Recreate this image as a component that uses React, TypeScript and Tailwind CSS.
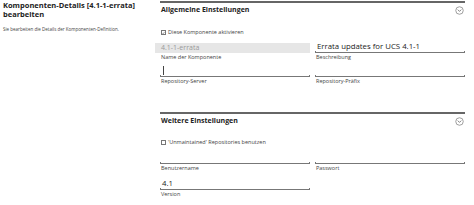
import React from "react";

const font = "font-['Open_Sans','Liberation_Sans',sans-serif]";

function Chevron() {
  return (
    <svg width="9" height="9" viewBox="0 0 18 18" fill="none" className="mr-px">
      <circle cx="9" cy="9" r="7.5" stroke="#777" strokeWidth="1.4" />
      <path d="M6 7.8l3 3 3-3" stroke="#666" strokeWidth="1.6" strokeLinecap="round" strokeLinejoin="round" />
    </svg>
  );
}

function Checkbox({ checked, label }: { checked?: boolean; label: string }) {
  return (
    <div className="flex items-center gap-[2px] pl-[1px]">
      <span className="w-[5px] h-[5px] border border-[#777] flex items-center justify-center bg-white">
        {checked && (
          <svg width="4" height="4" viewBox="0 0 8 8" fill="none">
            <path d="M1 4l2 2 4-5" stroke="#555" strokeWidth="1.4" />
          </svg>
        )}
      </span>
      <span className="text-[5.5px] text-[#444] leading-none">{label}</span>
    </div>
  );
}

function Field({ value, label, caret }: { value?: string; label: string; caret?: boolean }) {
  return (
    <div className="flex-1 min-w-0">
      <div className="h-[8px] flex items-end text-[7.8px] leading-[9px] text-[#222] pl-[2px] relative">
        {caret && <span className="absolute left-[3px] bottom-0 w-px h-[9px] bg-[#444]" />}
        {value}
      </div>
      <div className="h-[2px] border-x border-b border-[#777]" />
      <div className="text-[5.5px] leading-none text-[#444] mt-[2px] pl-[1px]">{label}</div>
    </div>
  );
}

function Disabled({ value, label }: { value: string; label: string }) {
  return (
    <div className="flex-1 min-w-0">
      <div className="h-[10px] bg-[#e6e6e6] text-[7px] leading-[10px] text-[#9a9a9a] pl-[6px] -ml-[5px]">{value}</div>
      <div className="text-[5.5px] leading-none text-[#444] mt-[2px] pl-[1px]">{label}</div>
    </div>
  );
}

function Section({ title, children }: { title: string; children: React.ReactNode }) {
  return (
    <div className="border-t-2 border-[#666]">
      <div className="flex items-center justify-between h-[15px] pl-[1px]">
        <span className="text-[7px] font-bold text-[#222]">{title}</span>
        <Chevron />
      </div>
      {children}
    </div>
  );
}

export default function App() {
  return (
    <div className={`flex w-[474px] h-[205px] bg-white overflow-hidden ${font}`}>
      <div className="w-[160px] pl-[3px] pt-[1px]">
        <h1 className="text-[7.5px] leading-[9px] font-bold text-[#222]">
          Komponenten-Details [4.1-1-errata] bearbeiten
        </h1>
        <p className="text-[4.5px] text-[#444] mt-[7px]">Sie bearbeiten die Details der Komponenten-Definition.</p>
      </div>
      <div className="w-[305px] pt-[1px]">
        <Section title="Allgemeine Einstellungen">
          <div className="mt-[12px]">
            <Checkbox checked label="Diese Komponente aktivieren" />
          </div>
          <div className="flex gap-[5px] mt-[7px]">
            <Disabled value="4.1-1-errata" label="Name der Komponente" />
            <Field value="Errata updates for UCS 4.1-1" label="Beschreibung" />
          </div>
          <div className="flex gap-[5px] mt-[7px]">
            <Field caret label="Repository-Server" />
            <Field label="Repository-Präfix" />
          </div>
        </Section>
        <div className="mt-[27px]">
          <Section title="Weitere Einstellungen">
            <div className="mt-[11px]">
              <Checkbox label="'Unmaintained' Repositories benutzen" />
            </div>
            <div className="flex gap-[5px] mt-[9px]">
              <Field label="Benutzername" />
              <Field label="Passwort" />
            </div>
            <div className="flex gap-[5px] mt-[8px]">
              <Field value="4.1" label="Version" />
              <div className="flex-1" />
            </div>
          </Section>
        </div>
      </div>
    </div>
  );
}
